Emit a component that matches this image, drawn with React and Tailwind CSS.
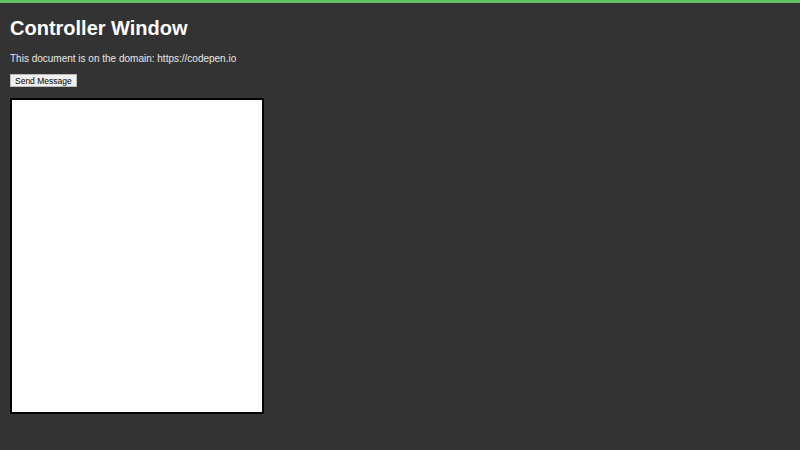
export default function App() {
  return (
    <div className="min-h-[450px] bg-[#333333] border-t-[3px] border-[#62c462] px-[10px] font-['Liberation_Sans',Arial,sans-serif] text-white">
      <h1 className="pt-[12px] text-[20px] font-bold leading-[26px]">Controller Window</h1>
      <p className="mt-[11px] text-[10px] leading-[14px] text-[#e8e8e8]">This document is on the domain: https://codepen.io</p>
      <button className="mt-[8px] block h-[13px] px-[4px] bg-[#f0f0f0] text-black text-[8.5px] leading-[13px] border border-[#bbbbbb]">Send Message</button>
      <div className="mt-[11px] w-[254px] h-[316px] bg-white border-[2px] border-black" />
    </div>
  );
}
